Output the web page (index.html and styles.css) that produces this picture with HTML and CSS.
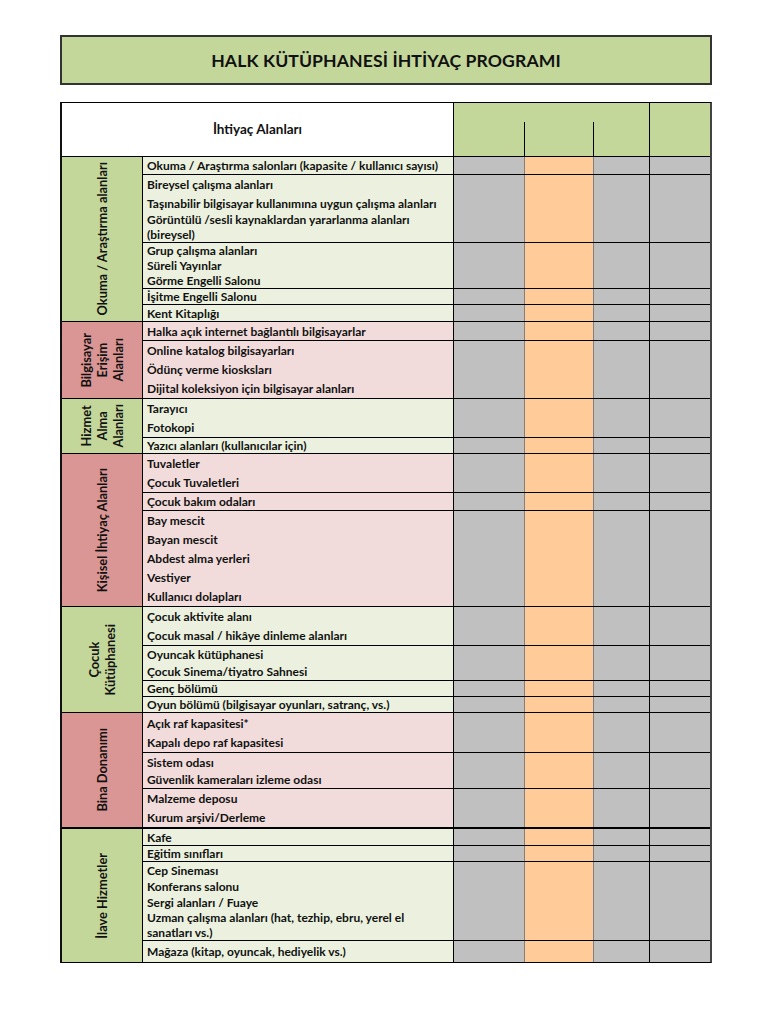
FILE: index.html
```html
<!DOCTYPE html>
<html lang="tr">
<head>
<meta charset="utf-8">
<title>Halk Kütüphanesi İhtiyaç Programı</title>
<link rel="stylesheet" href="styles.css">
</head>
<body>
<div class="sheet">
  <div class="title">HALK KÜTÜPHANESİ İHTİYAÇ PROGRAMI</div>
  <div class="table">
    <div class="head">
      <div class="head-label">İhtiyaç Alanları</div>
      <div class="head-green">
        <div class="hg-top"></div>
        <div class="hg-sub"><span class="c1"></span><span class="c2"></span><span class="c3"></span></div>
      </div>
      <div class="head-last"></div>
    </div>

    <section class="sec green">
      <div class="cat"><span>Okuma / Araştırma alanları</span></div>
      <div class="blocks">
        <div class="block"><div class="items"><div class="ln h17">Okuma / Araştırma salonları (kapasite / kullanıcı sayısı)</div></div><div class="v v1"></div><div class="v v2"></div><div class="v v3"></div><div class="v v4"></div></div>
        <div class="block"><div class="items"><div class="ln h19">Bireysel çalışma alanları</div><div class="ln h18">Taşınabilir bilgisayar kullanımına uygun çalışma alanları</div><div class="ln two">Görüntülü /sesli kaynaklardan yararlanma alanları<br>(bireysel)</div></div><div class="v v1"></div><div class="v v2"></div><div class="v v3"></div><div class="v v4"></div></div>
        <div class="block"><div class="items"><div class="ln h15">Grup çalışma alanları</div><div class="ln h15">Süreli Yayınlar</div><div class="ln h15">Görme Engelli Salonu</div></div><div class="v v1"></div><div class="v v2"></div><div class="v v3"></div><div class="v v4"></div></div>
        <div class="block"><div class="items"><div class="ln h15">İşitme Engelli Salonu</div></div><div class="v v1"></div><div class="v v2"></div><div class="v v3"></div><div class="v v4"></div></div>
        <div class="block"><div class="items"><div class="ln h16">Kent Kitaplığı</div></div><div class="v v1"></div><div class="v v2"></div><div class="v v3"></div><div class="v v4"></div></div>
      </div>
    </section>

    <section class="sec red">
      <div class="cat"><span>Bilgisayar<br>Erişim<br>Alanları</span></div>
      <div class="blocks">
        <div class="block"><div class="items"><div class="ln h18">Halka açık internet bağlantılı bilgisayarlar</div></div><div class="v v1"></div><div class="v v2"></div><div class="v v3"></div><div class="v v4"></div></div>
        <div class="block"><div class="items"><div class="ln h19">Online katalog bilgisayarları</div><div class="ln h19">Ödünç verme kiosksları</div><div class="ln h19">Dijital koleksiyon için bilgisayar alanları</div></div><div class="v v1"></div><div class="v v2"></div><div class="v v3"></div><div class="v v4"></div></div>
      </div>
    </section>

    <section class="sec green">
      <div class="cat"><span>Hizmet<br>Alma<br>Alanları</span></div>
      <div class="blocks">
        <div class="block"><div class="items"><div class="ln h19">Tarayıcı</div><div class="ln h19">Fotokopi</div></div><div class="v v1"></div><div class="v v2"></div><div class="v v3"></div><div class="v v4"></div></div>
        <div class="block"><div class="items"><div class="ln h15">Yazıcı alanları (kullanıcılar için)</div></div><div class="v v1"></div><div class="v v2"></div><div class="v v3"></div><div class="v v4"></div></div>
      </div>
    </section>

    <section class="sec red">
      <div class="cat"><span>Kişisel İhtiyaç Alanları</span></div>
      <div class="blocks">
        <div class="block"><div class="items"><div class="ln h19">Tuvaletler</div><div class="ln h19">Çocuk Tuvaletleri</div></div><div class="v v1"></div><div class="v v2"></div><div class="v v3"></div><div class="v v4"></div></div>
        <div class="block"><div class="items"><div class="ln h17">Çocuk bakım odaları</div></div><div class="v v1"></div><div class="v v2"></div><div class="v v3"></div><div class="v v4"></div></div>
        <div class="block"><div class="items"><div class="ln h19">Bay mescit</div><div class="ln h19">Bayan mescit</div><div class="ln h19">Abdest alma yerleri</div><div class="ln h19">Vestiyer</div><div class="ln h19">Kullanıcı dolapları</div></div><div class="v v1"></div><div class="v v2"></div><div class="v v3"></div><div class="v v4"></div></div>
      </div>
    </section>

    <section class="sec green">
      <div class="cat"><span>Çocuk<br>Kütüphanesi</span></div>
      <div class="blocks">
        <div class="block"><div class="items"><div class="ln h19">Çocuk aktivite alanı</div><div class="ln h19">Çocuk masal / hikâye dinleme alanları</div></div><div class="v v1"></div><div class="v v2"></div><div class="v v3"></div><div class="v v4"></div></div>
        <div class="block"><div class="items"><div class="ln h17">Oyuncak kütüphanesi</div><div class="ln h17">Çocuk Sinema/tiyatro Sahnesi</div></div><div class="v v1"></div><div class="v v2"></div><div class="v v3"></div><div class="v v4"></div></div>
        <div class="block"><div class="items"><div class="ln h15">Genç bölümü</div></div><div class="v v1"></div><div class="v v2"></div><div class="v v3"></div><div class="v v4"></div></div>
        <div class="block"><div class="items"><div class="ln h15">Oyun bölümü (bilgisayar oyunları, satranç, vs.)</div></div><div class="v v1"></div><div class="v v2"></div><div class="v v3"></div><div class="v v4"></div></div>
      </div>
    </section>

    <section class="sec red">
      <div class="cat"><span>Bina Donanımı</span></div>
      <div class="blocks">
        <div class="block"><div class="items"><div class="ln h20">Açık raf kapasitesi*</div><div class="ln h19">Kapalı depo raf kapasitesi</div></div><div class="v v1"></div><div class="v v2"></div><div class="v v3"></div><div class="v v4"></div></div>
        <div class="block"><div class="items"><div class="ln h18">Sistem odası</div><div class="ln h17">Güvenlik kameraları izleme odası</div></div><div class="v v1"></div><div class="v v2"></div><div class="v v3"></div><div class="v v4"></div></div>
        <div class="block"><div class="items"><div class="ln h19">Malzeme deposu</div><div class="ln h19">Kurum arşivi/Derleme</div></div><div class="v v1"></div><div class="v v2"></div><div class="v v3"></div><div class="v v4"></div></div>
      </div>
    </section>

    <section class="sec green thick">
      <div class="cat"><span>İlave Hizmetler</span></div>
      <div class="blocks">
        <div class="block"><div class="items"><div class="ln h16">Kafe</div></div><div class="v v1"></div><div class="v v2"></div><div class="v v3"></div><div class="v v4"></div></div>
        <div class="block"><div class="items"><div class="ln h15">Eğitim sınıfları</div></div><div class="v v1"></div><div class="v v2"></div><div class="v v3"></div><div class="v v4"></div></div>
        <div class="block"><div class="items"><div class="ln h16">Cep Sineması</div><div class="ln h16">Konferans salonu</div><div class="ln h16">Sergi alanları / Fuaye</div><div class="ln two30">Uzman çalışma alanları (hat, tezhip, ebru, yerel el<br>sanatları vs.)</div></div><div class="v v1"></div><div class="v v2"></div><div class="v v3"></div><div class="v v4"></div></div>
        <div class="block"><div class="items"><div class="ln h21">Mağaza (kitap, oyuncak, hediyelik vs.)</div></div><div class="v v1"></div><div class="v v2"></div><div class="v v3"></div><div class="v v4"></div></div>
      </div>
    </section>
  </div>
</div>
</body>
</html>
```

FILE: styles.css
```css
html, body {
  margin: 0;
  padding: 0;
  background: #ffffff;
}

body {
  font-family: Lato, "Open Sans", "DejaVu Sans", sans-serif;
  color: #111111;
}

.sheet {
  width: 652px;
  margin-left: 60px;
  padding-top: 35px;
}

.title {
  box-sizing: border-box;
  height: 50px;
  border: 2px solid #333333;
  background: #c4d79b;
  display: flex;
  align-items: center;
  justify-content: center;
  font-weight: 700;
  font-size: 17.6px;
  letter-spacing: 0.1px;
}

.table {
  box-sizing: border-box;
  width: 652px;
  margin-top: 17px;
  border-top: 1px solid #000000;
  border-bottom: 1px solid #000000;
  border-left: 2px solid #111111;
  border-right: 2px solid #444444;
}

/* header */
.head {
  display: flex;
  height: 53px;
}

.head-label {
  width: 391px;
  background: #ffffff;
  display: flex;
  align-items: center;
  justify-content: center;
  font-size: 13.5px;
  font-weight: 700;
  padding-bottom: 2px;
  box-sizing: border-box;
}

.head-green {
  box-sizing: border-box;
  width: 196px;
  border-left: 1px solid #000000;
  background: #c4d79b;
  display: flex;
  flex-direction: column;
}

.hg-top {
  height: 19px;
}

.hg-sub {
  flex: 1;
  display: flex;
}

.hg-sub .c1 { width: 70px; }
.hg-sub .c2 { width: 69px; border-left: 1px solid #000000; box-sizing: border-box; }
.hg-sub .c3 { width: 56px; border-left: 1px solid #000000; box-sizing: border-box; }

.head-last {
  box-sizing: border-box;
  width: 61px;
  border-left: 1px solid #000000;
  background: #c4d79b;
}

/* sections */
.sec {
  display: flex;
  border-top: 1px solid #000000;
}

.sec.thick {
  border-top: 2px solid #000000;
}

.cat {
  width: 80px;
  flex: none;
  display: flex;
  align-items: center;
  justify-content: center;
}

.cat span {
  writing-mode: vertical-rl;
  transform: rotate(180deg);
  text-align: center;
  font-size: 12.8px;
  font-weight: 700;
  line-height: 16px;
  white-space: nowrap;
}

.green .cat { background: #c4d79b; }
.red .cat { background: #da9694; }
.green .items { background: #ebf1de; }
.red .items { background: #f2dcdb; }

.blocks {
  flex: 1;
  display: flex;
  flex-direction: column;
}

.block {
  display: flex;
}

.block + .block {
  border-top: 1px solid #000000;
}

.items {
  box-sizing: border-box;
  width: 311px;
  flex: none;
  border-left: 1px solid #000000;
}

.ln {
  display: flex;
  align-items: center;
  padding-left: 4px;
  font-size: 12px;
  font-weight: 700;
  white-space: nowrap;
  line-height: 15px;
}

.ln.two, .ln.two30 {
  display: block;
  line-height: 15px;
}

.h15 { height: 15px; }
.h16 { height: 16px; }
.h17 { height: 17px; }
.h18 { height: 18px; }
.h19 { height: 19px; }
.h20 { height: 20px; }
.h21 { height: 21px; }
.two { height: 30px; }
.two30 { height: 30px; }

.v {
  box-sizing: border-box;
  flex: none;
}

.v1 { width: 71px; border-left: 1px solid #000000; background: #c0c0c0; }
.v2 { width: 69px; border-left: 1px solid #808080; background: #ffcc99; }
.v3 { width: 56px; border-left: 1px solid #808080; background: #c0c0c0; }
.v4 { width: 61px; border-left: 1px solid #000000; background: #c0c0c0; }
```
